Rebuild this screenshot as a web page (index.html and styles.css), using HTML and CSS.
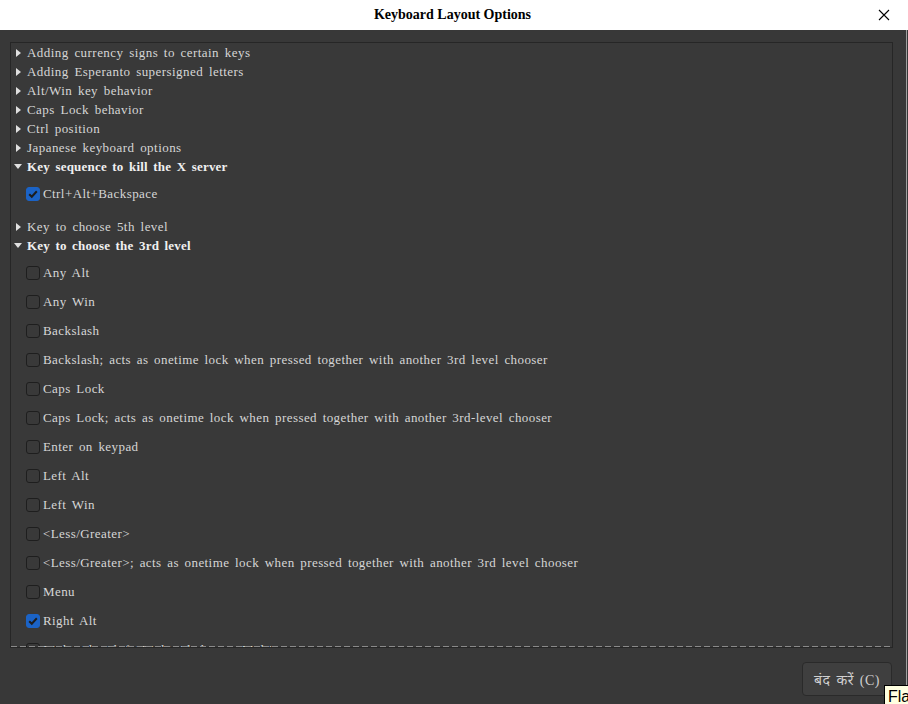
FILE: index.html
```html
<!DOCTYPE html>
<html>
<head>
<meta charset="utf-8">
<link rel="stylesheet" href="styles.css">
</head>
<body>
<div class="window">
  <div class="titlebar">
    <div class="title">Keyboard Layout Options</div>
    <svg class="close" width="12" height="12" viewBox="0 0 12 12"><path d="M1 1 L11 11 M11 1 L1 11" stroke="#000" stroke-width="1.1"/></svg>
  </div>
  <div class="content">
    <div class="panel">
      <div class="tree">
        <div class="node"><span class="arrow right"></span><span class="label">Adding currency signs to certain keys</span></div>
        <div class="node"><span class="arrow right"></span><span class="label">Adding Esperanto supersigned letters</span></div>
        <div class="node"><span class="arrow right"></span><span class="label">Alt/Win key behavior</span></div>
        <div class="node"><span class="arrow right"></span><span class="label">Caps Lock behavior</span></div>
        <div class="node"><span class="arrow right"></span><span class="label">Ctrl position</span></div>
        <div class="node"><span class="arrow right"></span><span class="label">Japanese keyboard options</span></div>
        <div class="node open"><span class="arrow down"></span><span class="label">Key sequence to kill the X server</span></div>
        <div class="group">
          <div class="opt"><span class="box checked"><svg viewBox="0 0 14 14" width="14" height="14"><path d="M3.2 7.2 L5.8 9.7 L10.8 4.3" fill="none" stroke="#1d1d1d" stroke-width="2"/></svg></span><span class="label">Ctrl+Alt+Backspace</span></div>
        </div>
        <div class="node"><span class="arrow right"></span><span class="label">Key to choose 5th level</span></div>
        <div class="node open"><span class="arrow down"></span><span class="label">Key to choose the 3rd level</span></div>
        <div class="group">
          <div class="opt"><span class="box"></span><span class="label">Any Alt</span></div>
          <div class="opt"><span class="box"></span><span class="label">Any Win</span></div>
          <div class="opt"><span class="box"></span><span class="label">Backslash</span></div>
          <div class="opt"><span class="box"></span><span class="label">Backslash; acts as onetime lock when pressed together with another 3rd level chooser</span></div>
          <div class="opt"><span class="box"></span><span class="label">Caps Lock</span></div>
          <div class="opt"><span class="box"></span><span class="label">Caps Lock; acts as onetime lock when pressed together with another 3rd-level chooser</span></div>
          <div class="opt"><span class="box"></span><span class="label">Enter on keypad</span></div>
          <div class="opt"><span class="box"></span><span class="label">Left Alt</span></div>
          <div class="opt"><span class="box"></span><span class="label">Left Win</span></div>
          <div class="opt"><span class="box"></span><span class="label">&lt;Less/Greater&gt;</span></div>
          <div class="opt"><span class="box"></span><span class="label">&lt;Less/Greater&gt;; acts as onetime lock when pressed together with another 3rd level chooser</span></div>
          <div class="opt"><span class="box"></span><span class="label">Menu</span></div>
          <div class="opt"><span class="box checked"><svg viewBox="0 0 14 14" width="14" height="14"><path d="M3.2 7.2 L5.8 9.7 L10.8 4.3" fill="none" stroke="#1d1d1d" stroke-width="2"/></svg></span><span class="label">Right Alt</span></div>
          <div class="opt"><span class="box"></span><span class="label">Right Alt, Shift+Right Alt key is Multi</span></div>
        </div>
      </div>
      <div class="undershoot"></div>
    </div>
    <div class="footer">
      <button class="btn">बंद करें (C)</button>
    </div>
  </div>
  <div class="tooltip">Flag</div>
</div>
</body>
</html>
```

FILE: styles.css
```css
html, body {
  margin: 0;
  padding: 0;
  background: #383838;
  width: 908px;
  height: 704px;
  overflow: hidden;
}
.window {
  position: relative;
  width: 908px;
  height: 704px;
  display: flex;
  flex-direction: column;
}
.titlebar {
  height: 30px;
  flex: none;
  background: #ffffff;
  position: relative;
  display: flex;
  align-items: center;
  justify-content: center;
}
.title {
  font-family: "Liberation Serif", "Times New Roman", serif;
  font-weight: bold;
  font-size: 14px;
  color: #000;
  margin-right: 3px;
}
.close {
  position: absolute;
  right: 18px;
  top: 9px;
}
.content {
  flex: 1;
  background: #383838;
  border-right: 1px solid #a0a0a0;
  margin-right: 1px;
  padding: 12px 13px 0 10px;
  display: flex;
  flex-direction: column;
}
.panel {
  position: relative;
  height: 604px;
  border: 1px solid #262626;
  background: #393939;
  overflow: hidden;
  flex: none;
}
.node {
  height: 19px;
  display: flex;
  align-items: center;
  font-family: "Liberation Serif", "Times New Roman", serif;
  font-size: 13px;
  color: #d6d6d6;
  letter-spacing: 0.45px;
  word-spacing: 2px;
  white-space: nowrap;
}
.node.open {
  font-weight: bold;
  color: #f0f0f0;
  letter-spacing: 0.2px;
}
.arrow {
  width: 16px;
  flex: none;
  display: flex;
  justify-content: flex-start;
  padding-left: 5px;
  box-sizing: border-box;
}
.arrow::before {
  content: "";
  display: block;
  width: 0;
  height: 0;
}
.arrow.right::before {
  border-top: 4.5px solid transparent;
  border-bottom: 4.5px solid transparent;
  border-left: 5px solid #e0e0e0;
}
.arrow.down {
  padding-left: 3px;
}
.arrow.down::before {
  border-left: 4.5px solid transparent;
  border-right: 4.5px solid transparent;
  border-top: 5px solid #e0e0e0;
}
.group {
  padding: 3px 0 9px 15px;
}
.opt {
  height: 29px;
  display: flex;
  align-items: center;
  font-family: "Liberation Serif", "Times New Roman", serif;
  font-size: 13px;
  color: #d6d6d6;
  letter-spacing: 0.42px;
  word-spacing: 2px;
  white-space: nowrap;
}
.box {
  width: 14px;
  height: 14px;
  box-sizing: border-box;
  border: 1px solid #1e1e1e;
  border-radius: 3px;
  background: #393939;
  margin-right: 3px;
  flex: none;
  display: block;
}
.box svg {
  display: block;
  margin: -1px;
}
.box.checked {
  background: #1b63c6;
  border-color: #1b63c6;
}
.undershoot {
  position: absolute;
  left: 0;
  right: 0;
  bottom: 0;
  height: 1px;
  background: repeating-linear-gradient(to right, #8a8a8a 0 6px, transparent 6px 9px);
}
.footer {
  display: flex;
  justify-content: flex-end;
  padding-top: 14px;
}
.btn {
  width: 90px;
  height: 34px;
  background: #3f3f3f;
  border: 1px solid #2a2a2a;
  border-radius: 4px;
  color: #cfcfcf;
  font-family: "Liberation Serif", "Noto Sans", serif;
  font-size: 14px;
  letter-spacing: 0.5px;
  word-spacing: 2px;
  padding: 0;
  margin-right: 1px;
}
.tooltip {
  position: absolute;
  left: 884px;
  top: 685px;
  height: 30px;
  padding: 0 3px;
  background: #ffffe1;
  border: 1px solid #000;
  font-family: "Liberation Sans", Arial, sans-serif;
  font-size: 16px;
  color: #000;
  line-height: 22px;
}
```
